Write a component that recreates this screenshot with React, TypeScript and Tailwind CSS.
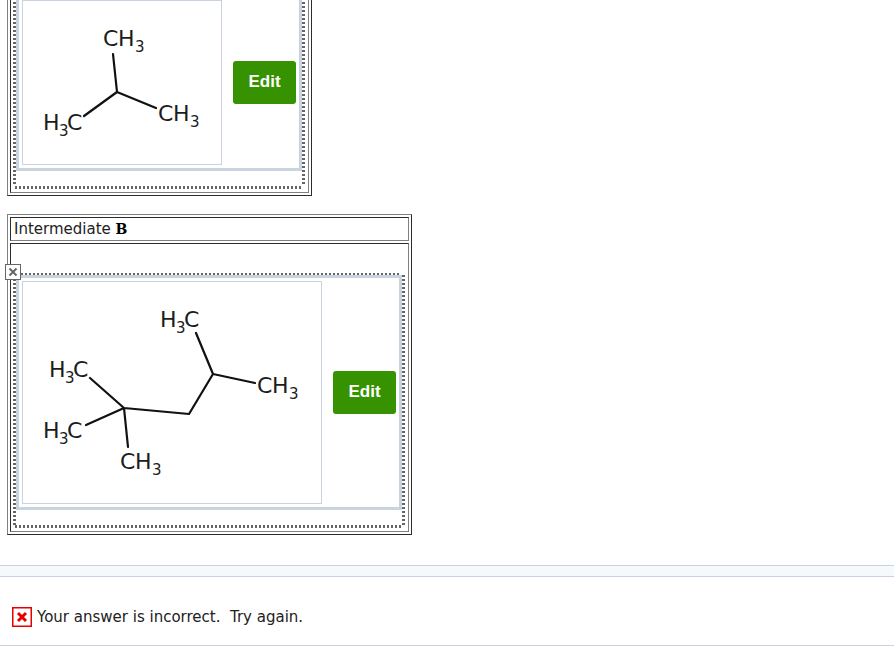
import type { ReactNode } from 'react'

type Label = { x: number; y: number; kind: 'CH3' | 'H3C' }

// H3C keeps its subscript tucked in close to the carbon
function Methyl({ x, y, kind }: Label) {
  const letters = kind === 'CH3' ? [['C', 0], ['H', 15], ['3', 32]] : [['H', 0], ['3', 16], ['C', 24]]
  return (
    <g>
      {letters.map(([ch, dx]) => (
        <text
          key={ch}
          x={x + Number(dx)}
          y={ch === '3' ? y + 6 : y}
          className={ch === '3' ? 'text-[15px]' : 'text-[22px]'}
        >
          {ch}
        </text>
      ))}
    </g>
  )
}

function Molecule({ name, width, height, bonds, labels }: {
  name: string
  width: number
  height: number
  bonds: string
  labels: Label[]
}) {
  return (
    <svg
      role="img"
      aria-label={name}
      width={width}
      height={height}
      viewBox={`0 0 ${width} ${height}`}
      className="block shrink-0 border border-[#c9d2e0] box-content fill-[#1c1c1c]"
    >
      <path d={bonds} fill="none" stroke="#111" strokeWidth="2.2" strokeLinecap="round" strokeLinejoin="round" />
      {labels.map((l) => <Methyl key={`${l.x}-${l.y}`} {...l} />)}
    </svg>
  )
}

const sideDots = 'w-[3px] bg-[repeating-linear-gradient(180deg,#666_0_2px,#fff_2px_4px)]'
const rowDots = 'bg-[repeating-linear-gradient(90deg,#666_0_2px,#fff_2px_4px)]'

function DrawingBox({ children, top }: { children: ReactNode; top?: boolean }) {
  return (
    <div className="mr-[3px] mb-[3px] ml-[2px]">
      {top && <div className={`mx-1 h-[2px] ${rowDots}`} />}
      <div className="flex">
        <div className={sideDots} />
        <div className="pb-[15px]">
          <div className="flex items-center gap-[11px] border-3 border-[#cad3e0] p-[3px]">
            {children}
            <button className="h-[43px] w-[63px] rounded-[3px] bg-[#369200] pb-[2px] font-['Liberation_Sans',sans-serif] text-[17px] font-bold text-white">
              Edit
            </button>
          </div>
        </div>
        <div className={sideDots} />
      </div>
      <div className={`mx-[2px] h-[3px] ${rowDots}`} />
    </div>
  )
}

const tableStyle =
  'border-separate border-spacing-[2px] border border-t-[#808080] border-l-[#808080] border-r-[#2c2c2c] border-b-[#2c2c2c]'
const cellStyle = 'border border-t-[#2c2c2c] border-l-[#2c2c2c] border-r-[#808080] border-b-[#808080] p-0'

export default function App() {
  return (
    <div className="overflow-hidden bg-white font-['DejaVu_Sans',Verdana,sans-serif] text-[15px] leading-[22px] text-[#222]">
      <main className="flex flex-col items-start gap-[18px] pb-[30px] pl-[7px]">
        <table className={`-mt-[10px] ${tableStyle}`}>
          <tbody>
            <tr>
              <td className={cellStyle}>
                <DrawingBox>
                  <Molecule
                    name="2-methylpropane"
                    width={198}
                    height={163}
                    bonds="M90 53 L94 91 L61 115 M94 91 L133 107"
                    labels={[
                      { x: 80, y: 45, kind: 'CH3' },
                      { x: 20, y: 129, kind: 'H3C' },
                      { x: 135, y: 120, kind: 'CH3' },
                    ]}
                  />
                </DrawingBox>
              </td>
            </tr>
          </tbody>
        </table>

        <table className={tableStyle}>
          <tbody>
            <tr>
              <td className={`${cellStyle} px-[3px]`}>
                Intermediate <b className="font-['DejaVu_Serif',serif] text-[14px] leading-none text-black">B</b>
              </td>
            </tr>
            <tr>
              <td className={`${cellStyle} relative pt-[29px]`}>
                <DrawingBox top>
                  <Molecule
                    name="2,2,4-trimethylpentane"
                    width={298}
                    height={221}
                    bonds="M67 96 L101 126 L63 143 M101 126 L105 165 M101 126 L166 132 L190 92 L173 51 M190 92 L232 101"
                    labels={[
                      { x: 137, y: 45, kind: 'H3C' },
                      { x: 26, y: 95, kind: 'H3C' },
                      { x: 20, y: 156, kind: 'H3C' },
                      { x: 97, y: 187, kind: 'CH3' },
                      { x: 234, y: 111, kind: 'CH3' },
                    ]}
                  />
                </DrawingBox>
                <svg
                  role="img"
                  aria-label="Incorrect part"
                  viewBox="0 0 16 16"
                  className="absolute top-5 -left-[6px] size-4"
                >
                  <rect x="0.5" y="0.5" width="15" height="15" fill="#fff" stroke="#666" />
                  <path d="M4.500 4.500 L11.500 11.500 M11.500 4.500 L4.500 11.500" stroke="#666" strokeWidth="2" />
                </svg>
              </td>
            </tr>
          </tbody>
        </table>
      </main>

      <div className="h-3 border-y border-[#c9d2e0] bg-[#f5f9fc]" />

      <section className="flex h-[69px] items-center gap-[5px] border-b border-[#c9d2e0] pt-3 pl-3">
        <svg aria-hidden="true" viewBox="0 0 20 20" className="size-5">
          <rect x="0.75" y="0.75" width="18.5" height="18.5" fill="#fff" stroke="#e60000" strokeWidth="1.5" />
          <path d="M6 6 L14 14 M14 6 L6 14" stroke="#e60000" strokeWidth="3" />
        </svg>
        <p role="status" className="whitespace-pre">Your answer is incorrect.  Try again.</p>
      </section>
    </div>
  )
}
